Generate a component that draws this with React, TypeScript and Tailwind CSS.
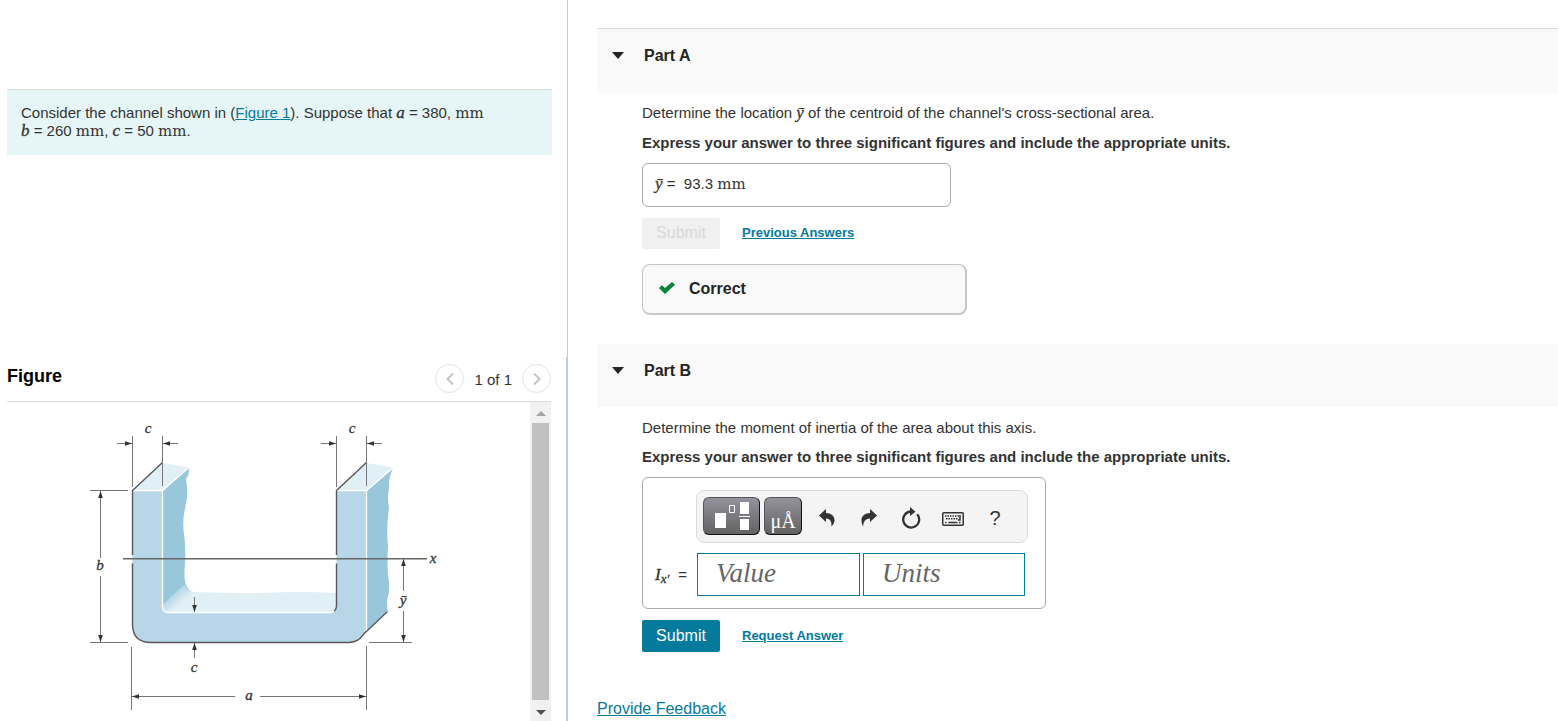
import { useState } from "react";
import type { ReactNode } from "react";

function Var({ children }: { children: ReactNode }) {
  return <i className="font-['Liberation_Serif',serif] text-[17px] leading-none [-webkit-text-stroke:0.3px_currentColor]">{children}</i>;
}

function Unit({ children }: { children: ReactNode }) {
  return <span className="font-['DejaVu_Serif',serif] text-[15px] leading-none">{children}</span>;
}

function ChannelFigure() {
  return (
    <svg viewBox="7 402 523 319" className="block h-[319px] w-[523px]" role="img" aria-label="Cross section of a channel with dimensions a, b and c">
      <defs>
        <marker id="arrow" viewBox="0 0 6 4" refX="6" refY="2" markerWidth="7" markerHeight="5" markerUnits="userSpaceOnUse" orient="auto-start-reverse">
          <path d="M0 0 6 2 0 4z" fill="#333" />
        </marker>
        <linearGradient id="corner" gradientUnits="userSpaceOnUse" x1="168" y1="590" x2="180" y2="604">
          <stop offset="0" stopColor="#98c6db" />
          <stop offset="1" stopColor="#e1eff7" />
        </linearGradient>
      </defs>

      {/* back faces */}
      <path d="M162.500 491 189 467.500Q190 474 186 479Q189 494 184.500 511Q182 523 184.500 538Q186 553 184.500 571Q184 589 192 592L166 612 162.500 608z" fill="#98c6db" />
      <path d="M163 611 163 604 184.500 584Q186 592 195 592Q230 593 260 593Q300 591 336 593V612H166z" fill="url(#corner)" />
      <path d="M366.500 491 393.500 467.500Q388 478 389 488Q387 499 389 508Q386 528 388 546Q387 560 388 575Q391 589 387 600Q387 606 387.500 611L366.500 631z" fill="#98c6db" />

      {/* tops */}
      <path d="M132.500 490.500 162.500 463 189 467.500 162.500 490.500z" fill="#e1eff7" />
      <path d="M336.500 490.500 366.500 463 393.500 467.500 366.500 490.500z" fill="#e1eff7" />

      {/* front face */}
      <path d="M132.500 490.500H162.500V608Q163 612.500 167 612.500H332Q336.500 612 336.500 607V490.500H366.500V631Q360 642 349 642.500H151Q133 642 132.500 625z" fill="#b7d6e7" />
      <g fill="none" stroke="#fff" strokeWidth="1.300">
        <path d="M133 490.500H162.500V607Q163 612.500 168 612.500H331L336 610" />
        <path d="M162.500 490.500 189 467.500M337 490.500H366.500L393.500 467.500M366.500 490.500V631" />
      </g>
      <g fill="none" stroke="#5a5558" strokeWidth="1.400">
        <path d="M132.500 555V490.500L162.500 462.500M132.500 563.500V625Q133 642.500 151 642.500H349C361 642 361 635 367 631L387.500 611.500" />
        <path d="M336.500 555V490.500L366.500 462.500M336.500 563.500V605Q336.500 610 334 611" />
        <path d="M123 558.800H427" stroke="#666" strokeWidth="1.600" />
      </g>

      {/* extension lines */}
      <g fill="none" stroke="#777">
        <path d="M132.500 436V487M162.500 436V486M336.500 436V487M366.500 436V486" />
        <path d="M90 490.500H128M90 642.500H128M369 642.500H412" />
        <path d="M131.500 647V710M366.500 646V710" />
      </g>

      {/* dimension arrows */}
      <g fill="none" stroke="#777">
        <path d="M117 443.500H132" markerEnd="url(#arrow)" />
        <path d="M178 443.500H163" markerEnd="url(#arrow)" />
        <path d="M321 443.500H336" markerEnd="url(#arrow)" />
        <path d="M382 443.500H367" markerEnd="url(#arrow)" />
        <path d="M100.500 558V491" markerEnd="url(#arrow)" />
        <path d="M100.500 576V642" markerEnd="url(#arrow)" />
        <path d="M194.500 597V612" markerEnd="url(#arrow)" />
        <path d="M194.500 658V643" markerEnd="url(#arrow)" />
        <path d="M403.500 591V559" markerEnd="url(#arrow)" />
        <path d="M403.500 611V642" markerEnd="url(#arrow)" />
        <path d="M235 696.500H132" markerEnd="url(#arrow)" />
        <path d="M260 696.500H366" markerEnd="url(#arrow)" />
      </g>

      <g fill="#333" stroke="#333" strokeWidth="0.300" className="font-['Liberation_Serif',serif] text-[15px] italic" textAnchor="middle">
        <text x="148" y="433">c</text>
        <text x="352" y="433">c</text>
        <text x="100" y="570">b</text>
        <text x="433" y="563">x</text>
        <text x="403" y="605">ȳ</text>
        <text x="194" y="672">c</text>
        <text x="249" y="700">a</text>
      </g>
    </svg>
  );
}

function PartHeader({ title, first = false }: { title: string; first?: boolean }) {
  return (
    <h2 className={`bg-[#f9f9f9] pt-[15px] pl-[15px] text-base leading-6 font-bold text-[#252525] ${first ? "border-t border-[#dcdcdc] pb-[25px]" : "pb-6"}`}>
      <button type="button" className="flex items-center gap-5">
        <svg viewBox="0 0 12 7" className="mb-0.5 h-[7px] w-3" fill="currentColor">
          <path d="M0 0h12L6 7z" />
        </svg>
        {title}
      </button>
    </h2>
  );
}

const toolButton = "flex h-[38px] w-[42px] items-center justify-center text-[#333]";
const darkButton = "flex h-[38px] items-center justify-center rounded-md border border-[#111] border-t-[#55555c] border-l-[#55555c] bg-linear-to-b from-[#95929d] to-[#626262] text-white";

function Toolbar() {
  return (
    <div className="ml-[53px] flex h-[53px] w-[332px] items-start rounded-lg border border-[#dcdcdc] bg-[#f4f4f4] pt-1.5 pl-1.5">
      <button type="button" aria-label="Templates" className={`${darkButton} w-[57px]`}>
        <svg viewBox="0 0 36 28" className="h-7 w-9">
          <path d="M1 11h11v15H1z M26 0h9v12H26z M26 17h9v11H26z" fill="#fff" />
          <path d="M25 14.500h11" stroke="#fff" />
          <path d="M15.500 3.500h5v7h-5z" fill="none" stroke="#fff" />
        </svg>
      </button>
      <button type="button" aria-label="Units" className={`${darkButton} ml-1 w-[38px] pt-2.5 font-['Liberation_Serif',serif] text-xl leading-none`}>
        μÅ
      </button>
      <div className="ml-1 flex pt-0.5">
        <button type="button" aria-label="Undo" className={toolButton}>
          <svg viewBox="0 0 16 18" className="h-[18px] w-4" fill="currentColor">
            <path d="M0 6.500 7 0v4C12 4 16 7 15.500 12Q15 15 12.500 17.500Q13 9.500 7 9.500V13z" />
          </svg>
        </button>
        <button type="button" aria-label="Redo" className={toolButton}>
          <svg viewBox="0 0 16 18" className="h-[18px] w-4" fill="currentColor">
            <path d="M16 6.500 9 0v4C4 4 0 7 .5 12Q.7 15 2 17.500Q2.500 9.500 9 9.500V13z" />
          </svg>
        </button>
        <button type="button" aria-label="Reset" className={toolButton}>
          <svg viewBox="0 0 20 22" className="h-[22px] w-5">
            <path d="M10 4.500A8 8 0 1 0 16.200 7.200" fill="none" stroke="currentColor" strokeWidth="2.300" />
            <path d="M9 0 14.500 4.700 9 9z" fill="currentColor" />
          </svg>
        </button>
        <button type="button" aria-label="Keyboard shortcuts" className={toolButton}>
          <svg viewBox="0 0 22 14" className="mt-0.5 h-3.5 w-[22px]" fill="none" stroke="currentColor">
            <rect x="0.750" y="0.750" width="20.500" height="12.500" rx="1" strokeWidth="1.500" />
            <path d="M3 4h14M4 6.800h12M3 10.500h2M17 10.500h2" strokeWidth="1.500" strokeDasharray="1.500 1" />
            <path d="M6.500 10.500h9M18 3v5h-2" strokeWidth="1.500" />
          </svg>
        </button>
        <button type="button" aria-label="Help" className={`${toolButton} text-xl`}>?</button>
      </div>
    </div>
  );
}

const boldLink = "text-[13px] leading-4 font-bold text-[#047a9c] underline";
const quantityInput = "h-[43px] min-w-0 border border-[#047a9c] pb-0.5 pl-[18px] font-['Liberation_Serif',serif] text-[27px] italic text-[#333] placeholder:text-[#666]";

export default function App() {
  const [value, setValue] = useState("");
  const [units, setUnits] = useState("");

  return (
    <div className="flex h-screen overflow-hidden bg-white font-['Liberation_Sans',Arial,sans-serif] text-[15px] leading-[18px] text-[#333]">
      <aside className="flex w-[568px] shrink-0 flex-col">
        <section className="h-[357px] shrink-0 border-r border-[#c5ccd6] pt-[89px] pr-[15px] pl-[7px]">
          <div className="border-t border-[#d5dedb] bg-[#e6f6f6] pt-3.5 pr-3 pb-[15px] pl-3.5">
            <p>
              Consider the channel shown in (<a href="#figure" className="text-[#047a9c] underline">Figure 1</a>). Suppose that <Var>a</Var> = 380, <Unit>mm</Unit>
              <br />
              <Var>b</Var> = 260 <Unit>mm</Unit>, <Var>c</Var> = 50 <Unit>mm</Unit>.
            </p>
          </div>
        </section>

        <section id="figure" className="flex min-h-0 flex-1 flex-col border-r-2 border-[#bdcbdb] pr-[15px] pl-[7px]">
          <header className="flex h-[45px] shrink-0 items-start justify-between border-b border-[#dcdcdc]">
            <h2 className="pt-2.5 text-lg leading-[18px] font-bold text-black">Figure</h2>
            <nav className="flex items-center gap-2.5 pt-[7px]" aria-label="Figure pages">
              <button type="button" disabled aria-label="Previous figure" className="flex size-[29px] items-center justify-center rounded-full border border-[#e3e3e3] text-[#c4c4c4]">
                <svg viewBox="0 0 8 12" className="h-3 w-2" fill="none" stroke="currentColor" strokeWidth="2"><path d="M7 .5 1.500 6 7 11.500" /></svg>
              </button>
              <span className="pt-0.5">1 of 1</span>
              <button type="button" disabled aria-label="Next figure" className="flex size-[29px] items-center justify-center rounded-full border border-[#e3e3e3] text-[#c4c4c4]">
                <svg viewBox="0 0 8 12" className="h-3 w-2" fill="none" stroke="currentColor" strokeWidth="2"><path d="M1 .5 6.500 6 1 11.500" /></svg>
              </button>
            </nav>
          </header>
          <div className="flex min-h-0 flex-1">
            <div className="min-w-0 flex-1 overflow-hidden">
              <ChannelFigure />
            </div>
            <div className="flex w-[21px] shrink-0 flex-col bg-[#f1f1f1] px-0.5">
              <button type="button" aria-label="Scroll up" className="flex h-[21px] items-center justify-center pt-0.5 text-[#a3a3a3]">
                <svg viewBox="0 0 10 5" className="h-[5px] w-2.5" fill="currentColor"><path d="M5 0 10 5H0z" /></svg>
              </button>
              <div className="flex-1 bg-[#c1c1c1]" />
              <button type="button" aria-label="Scroll down" className="flex h-[21px] items-center justify-center pt-1 text-[#505050]">
                <svg viewBox="0 0 10 5" className="h-[5px] w-2.5" fill="currentColor"><path d="M0 0h10L5 5z" /></svg>
              </button>
            </div>
          </div>
        </section>
      </aside>

      <main className="min-w-0 flex-1 pt-7 pl-[29px]">
        <PartHeader title="Part A" first />
        <div className="pt-[11px] pb-[29px] pl-[45px]">
          <p>Determine the location <Var>ȳ</Var> of the centroid of the channel's cross-sectional area.</p>
          <p className="mt-3 font-bold">Express your answer to three significant figures and include the appropriate units.</p>
          <div className="mt-[11px] flex h-11 w-[309px] items-center rounded-md border border-[#aaa] px-3 pb-0.5">
            <span className="whitespace-pre"><Var>ȳ</Var> =  93.3 <Unit>mm</Unit></span>
          </div>
          <div className="mt-[11px] flex items-center gap-[22px]">
            <button type="button" disabled className="h-[31px] w-[78px] rounded-xs bg-[#f0f0f0] pb-0.5 text-base text-[#d9d9d9]">Submit</button>
            <a href="#previous" className={`${boldLink} pb-0.5`}>Previous Answers</a>
          </div>
          <div className="mt-[15px] flex h-[51px] w-[325px] items-center gap-[14px] rounded-lg border border-r-2 border-b-2 border-[#c7c7c7] bg-[#f9f9f9] pl-4 text-base font-bold text-[#252525]">
            <svg viewBox="0 0 16 12" className="mb-0.5 h-3 w-4" fill="#048538">
              <path d="M0 6 3 3.200 6 6 13 0 16 2.700 6 12z" />
            </svg>
            Correct
          </div>
        </div>

        <PartHeader title="Part B" />
        <div className="pt-3 pl-[45px]">
          <p>Determine the moment of inertia of the area about this axis.</p>
          <p className="mt-[11px] font-bold">Express your answer to three significant figures and include the appropriate units.</p>
          <div className="mt-[11px] w-[404px] rounded-md border border-[#aaa] py-3">
            <Toolbar />
            <div className="mt-2.5 flex items-center pl-3">
              <label htmlFor="value" className="flex w-[42px] items-center justify-between pr-2.5 whitespace-nowrap">
                <span><Var>I</Var><sub className="text-[12px] [&>i]:text-[13px]"><Var>x′</Var></sub></span>
                <span>=</span>
              </label>
              <input id="value" value={value} onChange={(e) => setValue(e.target.value)} placeholder="Value" className={`${quantityInput} w-[163px]`} />
              <input aria-label="Units" value={units} onChange={(e) => setUnits(e.target.value)} placeholder="Units" className={`${quantityInput} ml-[3px] w-[162px]`} />
            </div>
          </div>
          <div className="mt-[11px] flex items-center gap-[22px]">
            <button type="button" className="h-8 w-[78px] rounded-xs bg-[#047a9c] text-base text-white">Submit</button>
            <a href="#request" className={boldLink}>Request Answer</a>
          </div>
        </div>
        <a href="#feedback" className="mt-12 inline-block text-base leading-[18px] text-[#047a9c] underline">Provide Feedback</a>
      </main>
    </div>
  );
}
